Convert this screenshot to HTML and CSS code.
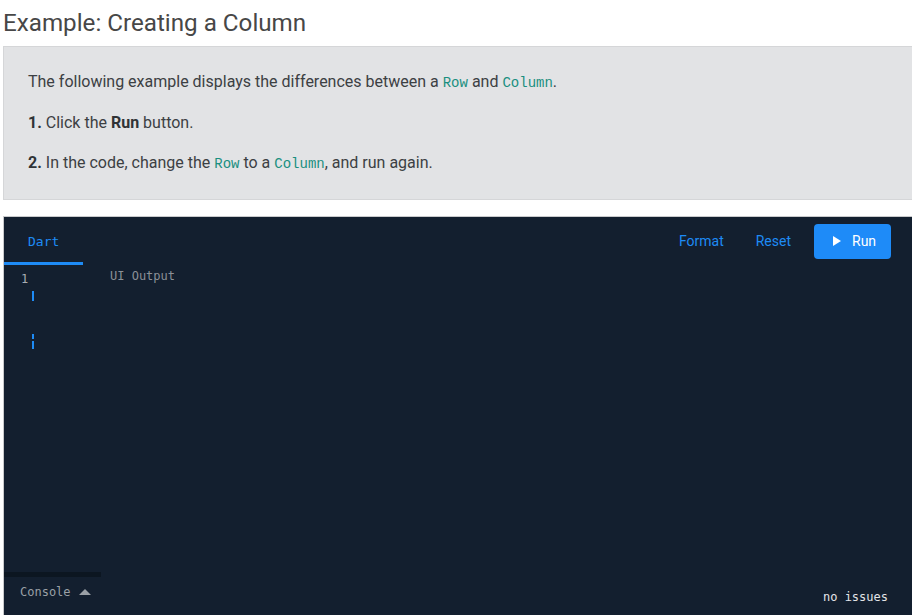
FILE: index.html
```html
<!DOCTYPE html>
<html lang="en">
<head>
<meta charset="utf-8">
<title>Example: Creating a Column</title>
<link rel="stylesheet" href="styles.css">
</head>
<body>
<div class="page">
  <h2 class="title">Example: Creating a Column</h2>
  <div class="note">
    <p>The following example displays the differences between a <code>Row</code> and <code>Column</code>.</p>
    <p><b>1.</b> Click the <b>Run</b> button.</p>
    <p><b>2.</b> In the code, change the <code>Row</code> to a <code>Column</code>, and run again.</p>
  </div>
  <div class="pad">
    <div class="pad-header">
      <div class="tab">Dart</div>
      <div class="actions">
        <span class="link">Format</span>
        <span class="link">Reset</span>
        <button class="run"><svg width="10" height="12" viewBox="0 0 10 12"><path d="M1 1 L9 6 L1 11 Z" fill="#fff"/></svg><span>Run</span></button>
      </div>
    </div>
    <div class="pad-body">
      <div class="editor">
        <div class="gutter">
          <div class="lineno">1</div>
          <div class="cursor c1"></div>
          <div class="cursor c2"></div>
          <div class="cursor c3"></div>
        </div>
        <div class="scrollbar"></div>
      </div>
      <div class="output">
        <div class="output-label">UI Output</div>
      </div>
    </div>
    <div class="pad-footer">
      <div class="console">Console <span class="tri"></span></div>
      <div class="issues">no issues</div>
    </div>
  </div>
</div>
</body>
</html>
```
FILE: styles.css
```css
html, body {
  margin: 0;
  padding: 0;
  background: #fff;
  overflow: hidden;
}
.page {
  padding-left: 3px;
  width: 911px;
  font-family: Roboto, "Noto Sans", sans-serif;
}
.title {
  font-family: Roboto, "Noto Sans", sans-serif;
  font-weight: 400;
  font-size: 24.2px;
  line-height: 28px;
  color: #474747;
  margin: 9px 0 9px 0;
}
.note {
  background: #e2e3e5;
  border: 1px solid #d5d6d8;
  padding: 23px 24px;
  color: #3c4043;
  font-size: 16px;
}
.note p {
  margin: 0 0 16px 0;
  line-height: 24px;
}
.note p:last-child { margin-bottom: 0; }
.note b { font-weight: 700; color: #303336; }
.note code {
  font-family: "Liberation Mono", "DejaVu Sans Mono", monospace;
  font-size: 14px;
  color: #1a8f80;
}
.pad {
  margin-top: 16px;
  width: 911px;
  height: 400px;
  background: #131f2f;
  border: 1px solid #c9cacc;
  display: flex;
  flex-direction: column;
}
.pad-header {
  height: 48px;
  display: flex;
  align-items: stretch;
  justify-content: space-between;
  padding-right: 24px;
}
.tab {
  width: 79px;
  box-sizing: border-box;
  padding-left: 24px;
  display: flex;
  align-items: center;
  font-family: "DejaVu Sans Mono", "Liberation Mono", monospace;
  font-size: 13px;
  color: #1e8bf5;
  border-bottom: 3px solid #1e8bf5;
  padding-top: 3px;
}
.actions {
  display: flex;
  align-items: center;
}
.link {
  font-size: 14px;
  color: #1e8bf5;
  margin-right: 32px;
}
.link + .link { margin-right: 23px; }
.run {
  height: 35px;
  width: 77px;
  border: none;
  border-radius: 4px;
  background: #1e8bf8;
  color: #fff;
  font-family: Roboto, sans-serif;
  font-size: 14px;
  display: flex;
  align-items: center;
  padding: 0 0 0 18px;
  gap: 10px;
}
.pad-body {
  flex: 1;
  display: flex;
  min-height: 0;
}
.editor {
  width: 97px;
  display: flex;
  flex-direction: column;
  justify-content: space-between;
}
.gutter {
  position: relative;
  flex: 1;
}
.lineno {
  font-family: "DejaVu Sans Mono", "Liberation Mono", monospace;
  font-size: 12px;
  color: #a8adb3;
  margin: 7px 0 0 17px;
}
.cursor {
  position: absolute;
  left: 28px;
  width: 2px;
  background: #1e8bf5;
}
.c1 { top: 26px; height: 10px; }
.c2 { top: 69px; height: 5px; }
.c3 { top: 76px; height: 8px; }
.scrollbar {
  height: 5px;
  background: #0c1621;
}
.output {
  flex: 1;
  padding: 4px 0 0 9px;
}
.output-label {
  font-family: "DejaVu Sans Mono", "Liberation Mono", monospace;
  font-size: 12px;
  color: #8b9097;
}
.pad-footer {
  height: 40px;
  display: flex;
  justify-content: space-between;
  align-items: flex-start;
  padding: 0 27px 0 16px;
}
.console {
  font-family: "DejaVu Sans Mono", "Liberation Mono", monospace;
  font-size: 12px;
  color: #9aa0a6;
  margin-top: 8px;
  display: flex;
  align-items: center;
  gap: 8px;
}
.tri {
  width: 0;
  height: 0;
  border-left: 6px solid transparent;
  border-right: 6px solid transparent;
  border-bottom: 6px solid #9aa0a6;
}
.issues {
  font-family: "DejaVu Sans Mono", "Liberation Mono", monospace;
  font-size: 12px;
  color: #e3e5e8;
  margin-top: 13px;
}
```
